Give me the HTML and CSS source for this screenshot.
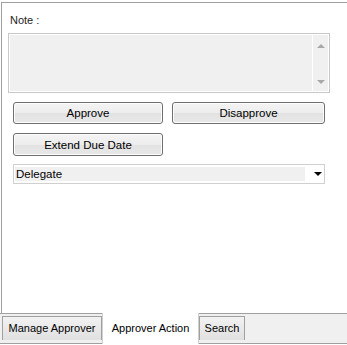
FILE: index.html
```html
<!DOCTYPE html>
<html lang="en">
<head>
  <meta charset="UTF-8" />
  <title>Approver Action</title>
  <link rel="stylesheet" href="styles.css">
</head>
<body>
  <div class="panel">
    <div class="note-label">Note :</div>
    <div class="note-box">
      <div class="note-text"></div>
      <div class="scrollbar">
        <span class="arrow-up"></span>
        <span class="arrow-down"></span>
      </div>
    </div>

    <div class="row">
      <button class="btn btn-left">Approve</button>
      <button class="btn btn-right">Disapprove</button>
    </div>
    <div class="row">
      <button class="btn btn-left btn-tall">Extend Due Date</button>
    </div>

    <div class="combo">
      <div class="combo-value">Delegate</div>
      <span class="combo-arrow"></span>
    </div>
  </div>

  <div class="tabs">
    <div class="tab tab-manage">Manage Approver</div>
    <div class="tab tab-active">Approver Action</div>
    <div class="tab tab-search">Search</div>
  </div>
</body>
</html>
```

FILE: styles.css
```css
body {
  margin: 0;
  font-family: "Liberation Sans", Arial, sans-serif;
  font-size: 11px;
  color: #000;
  background: #fff;
  width: 347px;
  height: 345px;
  overflow: hidden;
}
.panel {
  margin: 2px 0 0 1px;
  height: 299px;
  border-top: 1px solid #a0a0a0;
  border-left: 1px solid #a0a0a0;
  padding-top: 11px;
}
.note-label {
  margin-left: 8px;
  line-height: 13px;
  height: 13px;
  color: #1e1e1e;
}
.note-box {
  margin: 6px 0 0 6px;
  width: 322px;
  height: 60px;
  box-sizing: border-box;
  border: 1px solid #c8c8c8;
  background: #f0f0f0;
  box-shadow: inset 0 0 0 1px #fff;
  display: flex;
  padding: 1px;
}
.note-text {
  flex: 1;
}
.scrollbar {
  width: 15px;
  border-left: 1px solid #fff;
  position: relative;
  background: #f0f0f0;
}
.arrow-up, .arrow-down {
  position: absolute;
  left: 4px;
  width: 0;
  height: 0;
  border-left: 4px solid transparent;
  border-right: 4px solid transparent;
}
.arrow-up {
  top: 9px;
  border-bottom: 4px solid #a8a8a8;
}
.arrow-down {
  bottom: 7px;
  border-top: 4px solid #a8a8a8;
}
.row {
  display: flex;
  gap: 9px;
  margin: 9px 0 0 11px;
}
.btn {
  font-family: inherit;
  font-size: 11.5px;
  color: #000;
  height: 22px;
  padding: 0;
  border: 1px solid #707070;
  border-radius: 3px;
  background: linear-gradient(#f4f4f4 0%, #ededed 50%, #e2e2e2 51%, #e8e8e8 100%);
  box-shadow: inset 0 0 0 1px #fcfcfc;
  cursor: pointer;
}
.btn-left {
  width: 150px;
}
.btn-right {
  width: 153px;
}
.btn-tall {
  height: 23px;
}
.combo {
  margin: 8px 0 0 11px;
  width: 312px;
  height: 20px;
  box-sizing: border-box;
  border: 1px solid #d0d0d0;
  background: #fff;
  display: flex;
  align-items: center;
  padding: 0 2px 0 1px;
}
.combo-value {
  width: 290px;
  height: 14px;
  line-height: 14px;
  background: #f0f0f0;
  padding-left: 1px;
  box-sizing: border-box;
  font-size: 11.5px;
}
.combo-arrow {
  margin-left: 9px;
  width: 0;
  height: 0;
  border-left: 4px solid transparent;
  border-right: 4px solid transparent;
  border-top: 4px solid #000;
}
.tabs {
  height: 29px;
  border-top: 1px solid #a0a0a0;
  border-bottom: 1px solid #a0a0a0;
  background: #f0f0f0;
  display: flex;
  align-items: flex-start;
  padding-left: 2px;
}
.tab {
  margin-top: 2px;
  height: 24px;
  line-height: 22px;
  box-sizing: border-box;
  text-align: center;
  border: 1px solid #a0a0a0;
  border-bottom: none;
  background: linear-gradient(#f2f2f2, #e0e0e0);
}
.tab-manage {
  width: 100px;
}
.tab-search {
  width: 46px;
}
.tab-active {
  width: 97px;
  margin-top: -1px;
  height: 31px;
  line-height: 31px;
  background: #fff;
  border-color: #d0d0d0;
  border-top: none;
}
```
